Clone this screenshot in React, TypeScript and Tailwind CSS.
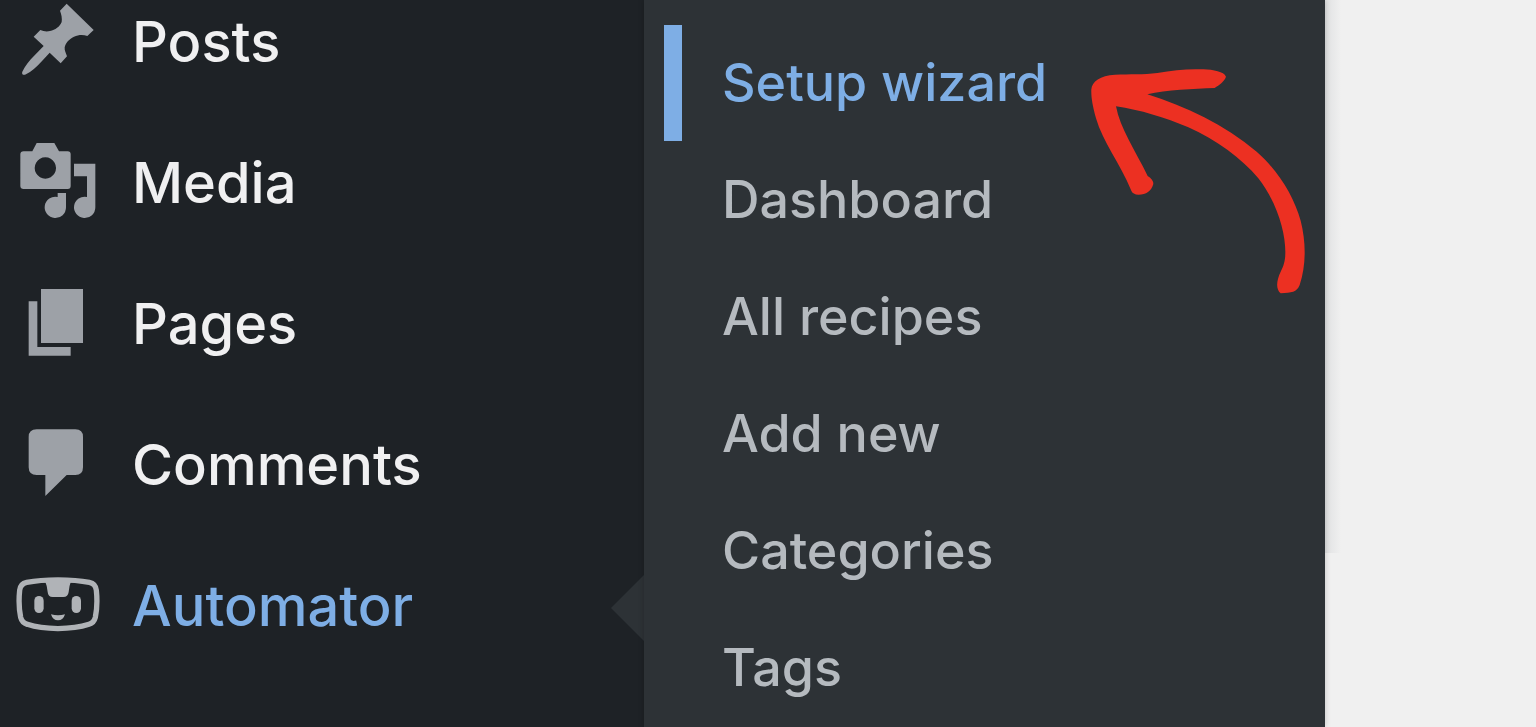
import React from 'react';

function PinIcon() {
  return (
    <svg viewBox="48 0 252 252" className="size-[84px] shrink-0" fill="currentColor" aria-hidden="true">
      <path d="M200 11 L281 90 L262 108 C250 104 236 104 222 110 C206 118 196 130 194 142 C193 152 198 160 201 169 L182 190 L149 158 L124 185 C110 200 94 215 78 223 C70 227 64 223 67 215 C74 200 88 182 104 166 L131 138 L101 110 L121 90 C130 94 140 96 150 93 C166 90 179 80 185 66 C187 54 184 43 180 32 Z" />
    </svg>
  );
}

function MediaIcon() {
  return (
    <svg viewBox="48 423 252 252" className="size-[84px] shrink-0" fill="currentColor" aria-hidden="true">
      <path fillRule="evenodd" d="M110 429 H163 L177 454 H203 Q212 454 212 463 V558 Q212 567 203 567 H71 Q61 567 61 558 V463 Q61 454 71 454 H97 Z M136 472 a32 32 0 1 0 0.1 0 Z" />
      <path d="M222 491 H286 V622 A32 32 0 1 1 261 591 V529 H222 Z" />
      <path d="M173 579 H198 V622 A32 32 0 1 1 173 591 Z" />
    </svg>
  );
}

function PagesIcon() {
  return (
    <svg viewBox="48 36 252 252" className="size-[84px] shrink-0" fill="currentColor" aria-hidden="true">
      <path d="M123 57 H249 V219 H123 Z" />
      <path d="M86 94 H112 V231 H212 V257 H86 Z" />
    </svg>
  );
}

function CommentIcon() {
  return (
    <svg viewBox="48 459 252 252" className="size-[84px] shrink-0" fill="currentColor" aria-hidden="true">
      <path d="M110 478 H226 Q249 478 249 501 V592 Q249 615 226 615 H200 L136 678 V615 H110 Q86 615 86 592 V501 Q86 478 110 478 Z" />
    </svg>
  );
}

function RobotIcon() {
  return (
    <svg viewBox="48 12 252 252" className="size-[84px] shrink-0 text-[#b0b3b7]" fill="currentColor" aria-hidden="true">
      <path
        d="M80 67 C132 57 216 57 268 67 Q287 71 289 91 C292 120 291 148 286 172 Q282 188 267 193 C215 210 132 210 82 193 Q66 188 62 172 C57 148 56 120 59 91 Q61 71 80 67 Z"
        fill="none"
        stroke="currentColor"
        strokeWidth="16"
      />
      <path d="M134 60 H214 Q208 76 206 96 Q204 111 190 111 H158 Q144 111 143 96 Q141 76 134 60 Z" />
      <rect x="103" y="108" width="28" height="51" rx="14" />
      <rect x="215" y="108" width="28" height="51" rx="14" />
      <path d="M153 163 Q174 169 195 163 Q190 181 174 181 Q158 181 153 163 Z" />
    </svg>
  );
}

const menu = [
  { label: 'Posts', icon: <PinIcon /> },
  { label: 'Media', icon: <MediaIcon /> },
  { label: 'Pages', icon: <PagesIcon /> },
  { label: 'Comments', icon: <CommentIcon /> },
  { label: 'Automator', icon: <RobotIcon />, active: true },
];

const submenu = ['Setup wizard', 'Dashboard', 'All recipes', 'Add new', 'Categories', 'Tags'];

export default function App() {
  return (
    <div className="flex min-h-screen overflow-hidden bg-[#f0f0f0] font-['Inter','Liberation_Sans',sans-serif]">
      {/* Admin menu */}
      <nav aria-label="Main menu" className="min-w-0 flex-[644] bg-[#1e2226]">
        <ul className="flex flex-col gap-[57px]">
          {menu.map((item) => (
            <li key={item.label} className="relative">
              <a
                href="#"
                className={`flex h-[84px] items-center gap-8 pl-4 text-[56px] font-medium ${item.active ? 'text-[#7eaee5]' : 'text-[#f0f0f1]'}`}
              >
                <span className="text-[#9da1a7]">{item.icon}</span>
                {item.label}
              </a>
              {item.active && (
                <span className="absolute right-0 top-[11px] border-y-[33px] border-r-[33px] border-y-transparent border-r-[#2d3236]" />
              )}
            </li>
          ))}
        </ul>
      </nav>

      {/* Automator submenu */}
      <nav aria-label="Automator" className="relative min-w-0 flex-[681] bg-[#2d3236] pt-6 shadow-[0_0_6px_rgba(0,0,0,0.2)]">
        <ul>
          {submenu.map((label, i) => (
            <li key={label} className="flex h-[117px] items-center pl-5">
              <span className={`h-[116px] w-[18px] ${i === 0 ? 'bg-[#7eaee5]' : ''}`} />
              <a href="#" className={`pl-10 text-[52px] font-medium ${i === 0 ? 'text-[#7eaee5]' : 'text-[#b5babf]'}`}>
                {label}
              </a>
            </li>
          ))}
        </ul>
        <svg viewBox="60 51 651 690" className="absolute right-[18px] top-[67px] h-[230px] w-[217px]" fill="#ec3022" aria-hidden="true">
          <path d="M64 118 C66 94 90 77 135 74 C180 72 220 75 262 69 C310 60 355 56 400 58 C430 59 462 65 468 80 C462 96 448 104 434 114 C370 117 290 119 232 133 C345 168 465 225 560 305 C625 362 672 440 692 512 C708 575 709 645 689 705 C680 727 665 728 632 730 C616 716 620 690 632 665 C642 645 646 632 646 605 C646 545 620 455 565 385 C515 325 440 270 355 232 C285 202 210 180 138 169 C150 235 195 300 233 378 Q250 388 250 402 C244 424 228 434 206 434 Q188 433 184 422 C150 340 98 275 78 205 C67 165 63 140 64 118 Z" />
        </svg>
      </nav>

      <main className="min-w-0 flex-[211]">
        <div className="h-[553px] w-4 bg-linear-to-r from-[#e0e1e2] to-[#f0f0f0]" />
      </main>
    </div>
  );
}
